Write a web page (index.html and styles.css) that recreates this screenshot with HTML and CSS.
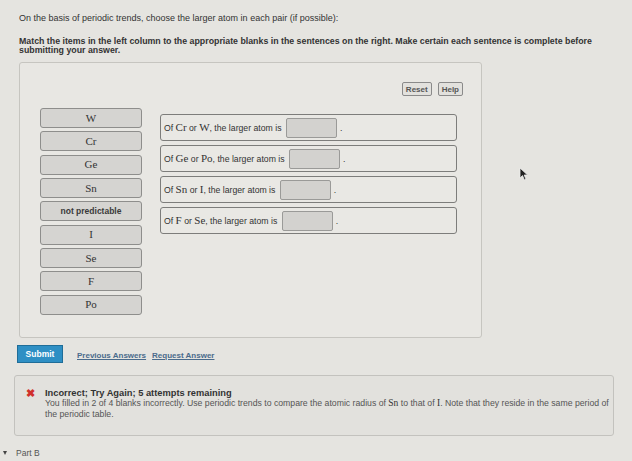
FILE: index.html
```html
<!DOCTYPE html>
<html lang="en">
<head>
  <meta charset="UTF-8">
  <title>Part A - Periodic Trends</title>
  <link rel="stylesheet" href="styles.css">
</head>
<body>

<div class="intro">
  <p class="question">On the basis of periodic trends, choose the larger atom in each pair (if possible):</p>
  <p class="instructions">Match the items in the left column to the appropriate blanks in the sentences on the right. Make certain each sentence is complete before submitting your answer.</p>
</div>

<!-- Drag and drop panel -->
<div class="panel">
  <div class="toolbar">
    <button class="tool-btn">Reset</button>
    <button class="tool-btn">Help</button>
  </div>

  <div class="match-area">
    <div class="choices">
      <div class="choice"><span class="sym">W</span></div>
      <div class="choice"><span class="sym">Cr</span></div>
      <div class="choice"><span class="sym">Ge</span></div>
      <div class="choice"><span class="sym">Sn</span></div>
      <div class="choice text">not predictable</div>
      <div class="choice"><span class="sym">I</span></div>
      <div class="choice"><span class="sym">Se</span></div>
      <div class="choice"><span class="sym">F</span></div>
      <div class="choice"><span class="sym">Po</span></div>
    </div>

    <div class="sentences">
      <div class="sentence">Of <span class="sym">Cr</span> or <span class="sym">W</span>, the larger atom is <span class="blank"></span>.</div>
      <div class="sentence">Of <span class="sym">Ge</span> or <span class="sym">Po</span>, the larger atom is <span class="blank"></span>.</div>
      <div class="sentence">Of <span class="sym">Sn</span> or <span class="sym">I</span>, the larger atom is <span class="blank"></span>.</div>
      <div class="sentence">Of <span class="sym">F</span> or <span class="sym">Se</span>, the larger atom is <span class="blank"></span>.</div>
    </div>
  </div>
</div>

<div class="actions">
  <button class="submit-btn">Submit</button>
  <a href="#" class="action-link">Previous Answers</a>
  <a href="#" class="action-link">Request Answer</a>
</div>

<!-- Feedback -->
<div class="feedback">
  <span class="cross">&#10006;</span>
  <div class="feedback-body">
    <p class="feedback-title">Incorrect; Try Again; 5 attempts remaining</p>
    <p class="feedback-text">You filled in 2 of 4 blanks incorrectly. Use periodic trends to compare the atomic radius of <span class="sym">Sn</span> to that of <span class="sym">I</span>. Note that they reside in the same period of the periodic table.</p>
  </div>
</div>

<div class="part">
  <span class="caret"></span>
  <span>Part B</span>
</div>

<svg class="cursor" width="10" height="14" viewBox="0 0 10 14">
  <path d="M1 1 L1 11 L3.5 8.6 L5.4 13 L7 12.3 L5.2 8 L8.6 8 Z" fill="#222" stroke="#eee" stroke-width="0.8"/>
</svg>

</body>
</html>
```

FILE: styles.css
```css
* {
  margin: 0;
  padding: 0;
  box-sizing: border-box;
}

body {
  font-family: "Liberation Sans", Arial, sans-serif;
  font-size: 8.5px;
  color: #333;
  background-color: #e5e4e0;
  width: 632px;
  height: 461px;
  overflow: hidden;
  position: relative;
}

.sym {
  font-family: "Liberation Serif", "Times New Roman", serif;
  font-size: 10.5px;
  line-height: 1;
  color: #333;
}

.intro {
  padding: 13px 19px 0 19px;
}

.question {
  font-size: 9px;
  line-height: 11px;
  color: #333;
}

.instructions {
  font-weight: bold;
  margin-top: 13px;
  line-height: 8.5px;
  font-size: 8.8px;
  color: #333;
}

.panel {
  margin: 8px 0 0 19px;
  width: 463px;
  height: 276px;
  border: 1px solid #c6c5c0;
  border-radius: 3px;
  background-color: #e8e7e3;
}

.toolbar {
  display: flex;
  justify-content: flex-end;
  gap: 6px;
  padding: 19px 18px 0 0;
}

.tool-btn {
  font-family: "Liberation Sans", Arial, sans-serif;
  font-size: 8px;
  font-weight: bold;
  color: #555;
  background-color: #e2e1dd;
  border: 1px solid #8a8a8a;
  border-radius: 2px;
  height: 14px;
  padding: 0 3px;
}

.match-area {
  display: flex;
  padding: 12px 0 0 20px;
}

.choices {
  display: flex;
  flex-direction: column;
  gap: 3.35px;
  width: 102px;
}

.choice {
  height: 20px;
  background-color: #d5d4d1;
  border: 1px solid #8e8e8c;
  border-radius: 3px;
  display: flex;
  justify-content: center;
  align-items: center;
}

.choice .sym {
  font-size: 11px;
}

.choice.text {
  font-weight: bold;
  font-size: 8.5px;
  color: #3a3a3a;
}

.sentences {
  display: flex;
  flex-direction: column;
  gap: 4px;
  width: 297px;
  margin: 6px 0 0 18px;
}

.sentence {
  height: 27px;
  border: 1px solid #7d7d7b;
  border-radius: 3px;
  background-color: #e9e8e4;
  display: flex;
  align-items: center;
  padding-left: 3px;
  white-space: pre;
  font-size: 8.7px;
  color: #333;
}

.sentence .sym {
  font-size: 11px;
}

.blank {
  display: inline-block;
  width: 51px;
  height: 20px;
  background-color: #d3d2cf;
  border: 1px solid #9a9a98;
  border-radius: 2px;
  margin: 0 3px 0 2px;
}

.actions {
  display: flex;
  align-items: center;
  gap: 12px;
  padding: 7px 0 0 17px;
}

.submit-btn {
  font-family: "Liberation Sans", Arial, sans-serif;
  font-size: 8.5px;
  font-weight: bold;
  color: #fff;
  background-color: #2e8fc4;
  border: 1px solid #1f6d98;
  width: 46px;
  height: 18px;
  margin-right: 2px;
}

.action-link {
  font-size: 8px;
  font-weight: bold;
  color: #4a6b8c;
  text-decoration: underline;
  margin-top: 3px;
}

.action-link + .action-link {
  margin-left: -6px;
}

.feedback {
  margin: 12px 0 0 14px;
  width: 600px;
  height: 61px;
  border: 1px solid #c3c2be;
  border-radius: 3px;
  background-color: #e2e1dd;
  display: flex;
  padding: 12px 0 0 11px;
}

.cross {
  color: #d0302c;
  font-size: 11px;
  font-weight: bold;
  width: 20px;
  line-height: 11px;
}

.feedback-title {
  font-weight: bold;
  font-size: 9.3px;
  color: #333;
  line-height: 10px;
}

.feedback-text {
  font-size: 8.7px;
  color: #555;
  line-height: 10.5px;
  width: 568px;
}

.feedback-text .sym {
  font-size: 9.5px;
  line-height: 8px;
}

.part {
  display: flex;
  align-items: center;
  gap: 9px;
  padding: 12px 0 0 3px;
  font-size: 8.5px;
  color: #555;
}

.caret {
  width: 0;
  height: 0;
  border-left: 2.5px solid transparent;
  border-right: 2.5px solid transparent;
  border-top: 4px solid #444;
}

.cursor {
  position: absolute;
  left: 519px;
  top: 167px;
}
```
